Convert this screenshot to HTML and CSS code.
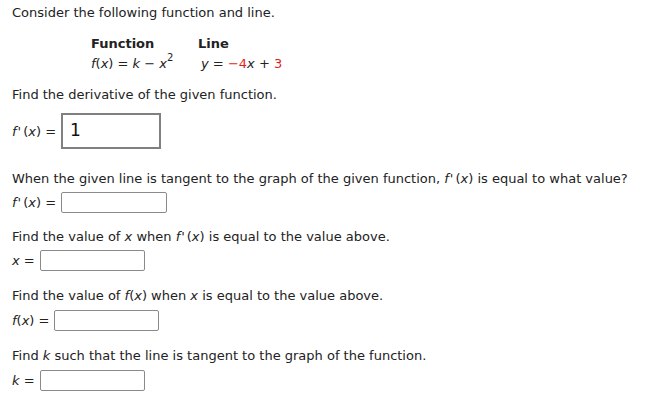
FILE: index.html
```html
<!DOCTYPE html>
<html>
<head>
<meta charset="utf-8">
<link rel="stylesheet" href="styles.css">
</head>
<body>
<div class="page">
  <p class="intro">Consider the following function and line.</p>
  <div class="table">
    <div class="col col-fn">
      <div class="head">Function</div>
      <div class="expr"><i>f</i>(<i>x</i>) = <i>k</i> − <i>x</i><sup>2</sup></div>
    </div>
    <div class="col col-line">
      <div class="head">Line</div>
      <div class="expr"><i>y</i> = <span class="red">−4</span><i>x</i> + <span class="red">3</span></div>
    </div>
  </div>

  <p class="q q1">Find the derivative of the given function.</p>
  <div class="answer first">
    <span class="lbl"><i>f</i><span class="prime">'</span>(<i>x</i>) =</span>
    <span class="box big">1</span>
  </div>

  <p class="q q2">When the given line is tangent to the graph of the given function, <i>f</i><span class="prime">'</span>(<i>x</i>) is equal to what value?</p>
  <div class="answer">
    <span class="lbl"><i>f</i><span class="prime">'</span>(<i>x</i>) =</span>
    <span class="box small w105"></span>
  </div>

  <p class="q q3">Find the value of <i>x</i> when <i>f</i><span class="prime">'</span>(<i>x</i>) is equal to the value above.</p>
  <div class="answer">
    <span class="lbl"><i>x</i> =</span>
    <span class="box small w104"></span>
  </div>

  <p class="q q3 q4">Find the value of <i>f</i>(<i>x</i>) when <i>x</i> is equal to the value above.</p>
  <div class="answer later">
    <span class="lbl"><i>f</i>(<i>x</i>) =</span>
    <span class="box small w104"></span>
  </div>

  <p class="q q3 q4">Find <i>k</i> such that the line is tangent to the graph of the function.</p>
  <div class="answer later">
    <span class="lbl"><i>k</i> =</span>
    <span class="box small w104"></span>
  </div>
</div>
</body>
</html>
```
FILE: styles.css
```css
html, body {
  margin: 0;
  padding: 0;
  background: #fff;
}
body {
  font-family: "DejaVu Sans", Verdana, sans-serif;
  font-size: 13px;
  color: #222;
}
.page {
  padding: 4px 0 0 12px;
}
p {
  margin: 0;
  line-height: 18px;
}
.table {
  display: flex;
  margin: 13px 0 0 79px;
}
.col-fn { width: 107px; }
.head {
  font-weight: bold;
  line-height: 18px;
}
.expr {
  line-height: 20px;
  margin-top: 1px;
}
.col-line .expr { padding-left: 3px; }
sup {
  font-size: 10px;
  line-height: 0;
  vertical-align: 7px;
}
.red { color: #e41d1d; }
i { font-style: italic; }
.prime { margin: 0 2px 0 1px; }
.q1 { margin-top: 12px; }
.q2 { margin-top: 21px; }
.q3 { margin-top: 15px; }
.q3.q4 { margin-top: 16px; }
.answer {
  display: flex;
  align-items: center;
  gap: 5px;
  margin-top: 4px;
}
.answer.first { margin-top: 9px; }
.answer.later { margin-top: 5px; }
.box {
  display: inline-block;
  box-sizing: border-box;
  border: 1px solid #8a8a8a;
  background: #fff;
}
.box.big {
  width: 100px;
  height: 36px;
  border-width: 2px;
  border-color: #808080;
  font-size: 17px;
  line-height: 30px;
  padding-left: 7px;
  color: #111;
}
.box.small {
  height: 21px;
  border-radius: 2px;
}
.w105 { width: 106px; }
.w104 { width: 105px; }
```
